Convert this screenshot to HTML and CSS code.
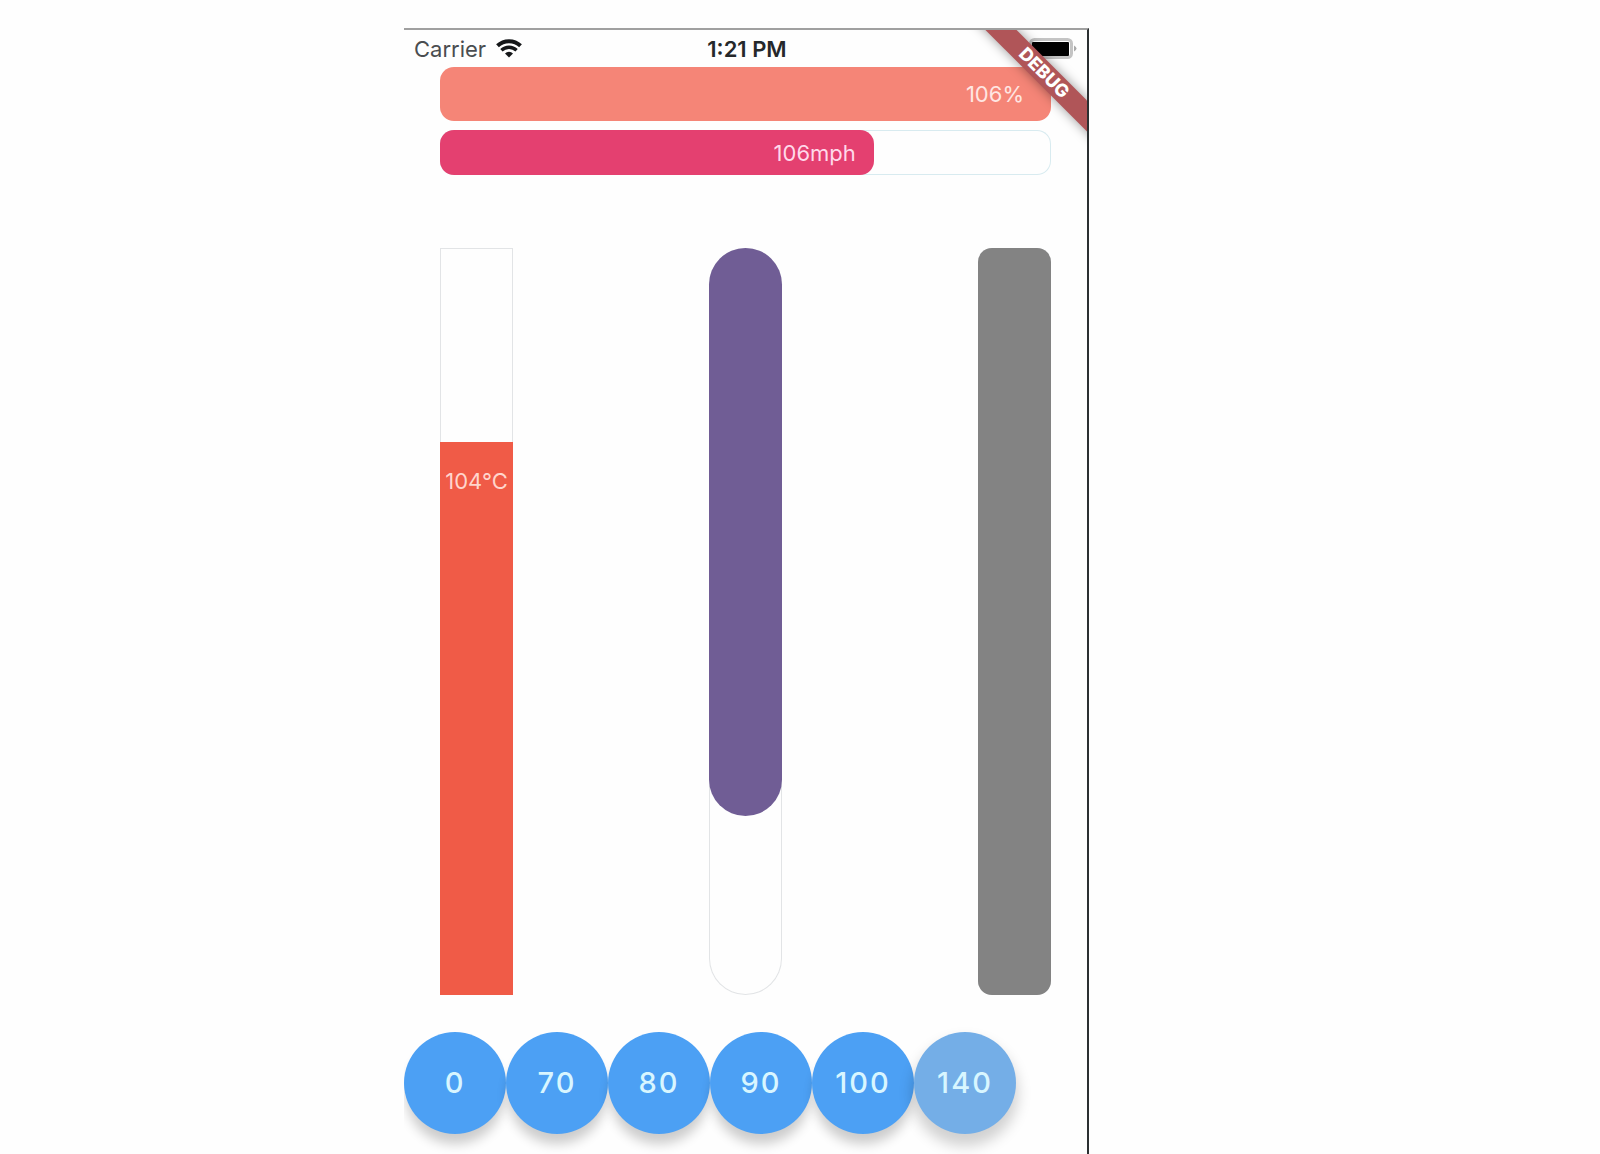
FILE: index.html
```html
<!DOCTYPE html>
<html lang="en">
<head>
<meta charset="utf-8">
<meta name="viewport" content="width=device-width, initial-scale=1">
<title>Animated progress bars</title>
<link rel="stylesheet" href="styles.css">
</head>
<body>
<main class="phone">
  <header class="status">
    <div class="carrier">
      <span>Carrier</span>
      <svg class="wifi" viewBox="0 0 26 19" aria-hidden="true">
        <path d="M1.5 6.8a16.5 16.5 0 0 1 23 0" fill="none" stroke="#151719" stroke-width="4"/>
        <path d="M5.4 11.300a11 11 0 0 1 15.200 0" fill="none" stroke="#151719" stroke-width="3.300"/>
        <path d="M13 18.600l-4-4.200a5.700 5.700 0 0 1 8 0z" fill="#151719"/>
      </svg>
    </div>
    <time class="clock">1:21 PM</time>
    <svg class="battery" viewBox="0 0 48 21" aria-hidden="true">
      <rect x="1.500" y="1.500" width="41" height="18" rx="4" fill="#fff" stroke="#c4c4c4" stroke-width="3"/>
      <rect x="3" y="4" width="37" height="14" rx="1" fill="#000"/>
      <path d="M45 7.500q5 3 0 6z" fill="#aaa"/>
    </svg>
  </header>

  <section class="horizontal">
    <div class="track percent" role="progressbar" aria-label="Percent" aria-valuenow="106">
      <div class="fill" style="width:100%">106%</div>
    </div>
    <div class="track speed" role="progressbar" aria-label="Speed" aria-valuenow="106">
      <div class="fill" style="width:71%">106mph</div>
    </div>
  </section>

  <section class="vertical">
    <div class="column heat" role="progressbar" aria-label="Temperature" aria-valuenow="104">
      <div class="fill" style="height:74%">104°C</div>
    </div>
    <div class="column pill" role="progressbar" aria-label="Level" aria-valuenow="106">
      <div class="fill" style="height:76%"></div>
    </div>
    <div class="column solid" role="progressbar" aria-label="Capacity" aria-valuenow="100">
      <div class="fill" style="height:100%"></div>
    </div>
  </section>

  <nav class="values">
    <button type="button">0</button>
    <button type="button">70</button>
    <button type="button">80</button>
    <button type="button">90</button>
    <button type="button">100</button>
    <button type="button" class="pressed">140</button>
  </nav>

  <div class="corner"><span class="ribbon">DEBUG</span></div>
</main>
</body>
</html>
```
FILE: styles.css
```css
* {
  box-sizing: border-box;
}

body {
  margin: 0;
  min-height: 100vh;
  padding-top: 28px;
  display: grid;
  grid-template-columns: 404fr 685fr 511fr;
  background: #fefefe;
  font-family: Inter, "Liberation Sans", sans-serif;
  font-size: 22px;
  line-height: 28px;
  color: #25282a;
}

.phone {
  grid-column: 2;
  position: relative;
  display: flex;
  flex-direction: column;
  border-top: 2px solid #a0a0a0;
  border-right: 2px solid #2c3032;
  overflow: hidden;
}

.status {
  display: grid;
  grid-template-columns: 1fr auto 1fr;
  align-items: center;
  height: 37px;
  padding: 0 10px;
}

.carrier {
  display: flex;
  align-items: center;
  gap: 10px;
  color: #4a4d50;
}

.wifi {
  width: 26px;
  height: 19px;
}

.clock {
  padding-left: 3px;
  font-weight: 600;
}

.battery {
  width: 48px;
  height: 21px;
  justify-self: end;
}

.horizontal {
  display: grid;
  gap: 9px;
  padding: 0 36px;
}

.track {
  border-radius: 14px;
}

.track .fill {
  height: 100%;
  display: flex;
  align-items: center;
  justify-content: flex-end;
  border-radius: 14px;
}

.percent {
  height: 54px;
}

.percent .fill {
  padding-right: 27px;
  background: #f58577;
  color: #ffe6e2;
}

.speed {
  height: 45px;
  box-shadow: inset 0 0 0 1px #d8ebf0;
}

.speed .fill {
  padding-right: 18px;
  background: #e44070;
  color: #ffd9ea;
}

.vertical {
  flex: 1;
  display: flex;
  justify-content: space-between;
  padding: 73px 36px 37px;
}

.column {
  width: 73px;
  display: flex;
  flex-direction: column;
  box-shadow: inset 0 0 0 1px #e2e4e6;
}

.heat {
  justify-content: flex-end;
}

.heat .fill {
  padding-top: 25px;
  background: #f05b47;
  color: #ffd5cc;
  text-align: center;
}

.pill,
.pill .fill {
  border-radius: 37px;
}

.pill .fill {
  background: #705d95;
}

.solid,
.solid .fill {
  border-radius: 14px;
}

.solid .fill {
  background: #838383;
}

.values {
  display: flex;
  padding-bottom: 20px;
}

.values button {
  width: 102px;
  height: 102px;
  padding: 0;
  border: 0;
  border-radius: 50%;
  background: #4ca0f4;
  box-shadow: 0 12px 12px -2px rgba(0, 0, 0, 0.2);
  color: #d8f6ff;
  font: 500 29px/36px Inter, "Liberation Sans", sans-serif;
  letter-spacing: 2px;
}

.values .pressed {
  background: #74aee7;
  box-shadow: 0 10px 14px 2px rgba(0, 0, 0, 0.18);
}

/* Debug banner laid across the top right corner */
.corner {
  position: absolute;
  top: 0;
  right: 0;
  width: 120px;
  height: 120px;
  overflow: hidden;
  pointer-events: none;
}

.ribbon {
  position: absolute;
  top: 32px;
  right: -57px;
  width: 200px;
  background: #b05558;
  box-shadow: 0 0 12px rgba(0, 0, 0, 0.4);
  color: #fff;
  font-size: 18px;
  font-weight: 800;
  line-height: 22px;
  text-align: center;
  transform: rotate(45deg);
}
```
